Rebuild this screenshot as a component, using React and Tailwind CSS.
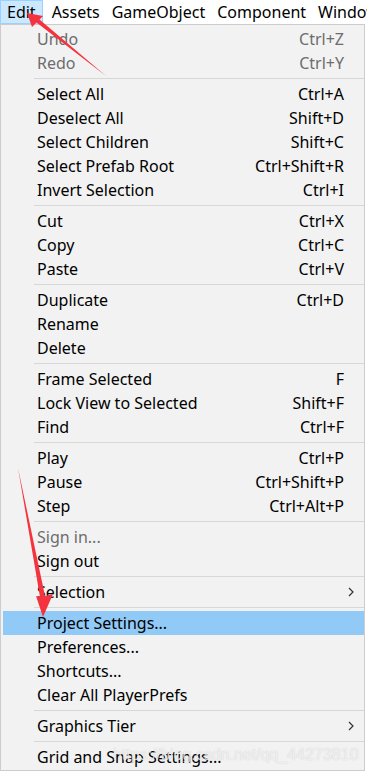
import React from "react";

const groups = [
  [
    { label: "Undo", key: "Ctrl+Z", disabled: true },
    { label: "Redo", key: "Ctrl+Y", disabled: true },
  ],
  [
    { label: "Select All", key: "Ctrl+A" },
    { label: "Deselect All", key: "Shift+D" },
    { label: "Select Children", key: "Shift+C" },
    { label: "Select Prefab Root", key: "Ctrl+Shift+R" },
    { label: "Invert Selection", key: "Ctrl+I" },
  ],
  [
    { label: "Cut", key: "Ctrl+X" },
    { label: "Copy", key: "Ctrl+C" },
    { label: "Paste", key: "Ctrl+V" },
  ],
  [
    { label: "Duplicate", key: "Ctrl+D" },
    { label: "Rename" },
    { label: "Delete" },
  ],
  [
    { label: "Frame Selected", key: "F" },
    { label: "Lock View to Selected", key: "Shift+F" },
    { label: "Find", key: "Ctrl+F" },
  ],
  [
    { label: "Play", key: "Ctrl+P" },
    { label: "Pause", key: "Ctrl+Shift+P" },
    { label: "Step", key: "Ctrl+Alt+P" },
  ],
  [
    { label: "Sign in...", disabled: true },
    { label: "Sign out" },
  ],
  [{ label: "Selection", sub: true }],
  [
    { label: "Project Settings...", active: true },
    { label: "Preferences..." },
    { label: "Shortcuts..." },
    { label: "Clear All PlayerPrefs" },
  ],
  [{ label: "Graphics Tier", sub: true }],
  [{ label: "Grid and Snap Settings..." }],
];

const Chevron = () => (
  <svg width="6" height="10" viewBox="0 0 6 10" className="text-[#333]">
    <polyline points="1,1 5,5 1,9" fill="none" stroke="currentColor" strokeWidth="1.2" />
  </svg>
);

const MenuRow = ({ item }) => (
  <div
    className={`flex h-6 items-center pl-[34px] pr-[20px] ${
      item.active ? "bg-[#91c9f7]" : ""
    } ${item.disabled ? "text-[#6d6d6d]" : "text-black"}`}
  >
    <span className="flex-1 whitespace-nowrap">{item.label}</span>
    {item.key && <span className="whitespace-nowrap">{item.key}</span>}
    {item.sub && (
      <span className="-mr-[10px] flex items-center">
        <Chevron />
      </span>
    )}
  </div>
);

export default function App() {
  return (
    <div className="relative h-[772px] w-[367px] overflow-hidden bg-white font-['Noto_Sans',sans-serif] text-[16px] leading-none">
      {/* menu bar */}
      <div className="flex h-6 items-stretch text-black">
        <div className="flex items-center border border-[#99d1ff] bg-[#cce8ff] px-[6px]">Edit</div>
        <div className="ml-[3px] flex items-center px-[6px]">Assets</div>
        <div className="flex items-center px-[6px]">GameObject</div>
        <div className="flex items-center px-[6px]">Component</div>
        <div className="flex items-center px-[6px] whitespace-nowrap">Window</div>
      </div>

      {/* dropdown panel */}
      <div className="w-[365px] border border-[#cccccc] bg-[#f2f2f2] pb-[1px] pl-[2px] pt-[2px]">
        {groups.map((g, gi) => (
          <React.Fragment key={gi}>
            {gi > 0 && (
              <div className="py-[3px] pl-[31px]">
                <div className="h-px bg-[#d7d7d7]" />
              </div>
            )}
            {g.map((item) => (
              <MenuRow key={item.label} item={item} />
            ))}
          </React.Fragment>
        ))}
      </div>

      {/* watermark */}
      <div className="pointer-events-none absolute left-[113px] top-[747px] whitespace-nowrap font-['Liberation_Sans',sans-serif] text-[16px] text-white/70 [text-shadow:0_0_1px_rgba(150,150,150,0.5)]">
        https://blog.csdn.net/qq_44273810
      </div>

      {/* red arrows */}
      <svg className="pointer-events-none absolute left-0 top-0" width="367" height="772">
        <polygon points="27,13 43,16 39.5,19.5 106,76 36.5,22.5 32,27" fill="#f5333f" />
        <polygon points="43,617 36,596 40,597 18,468 45,596 53,594" fill="#f5333f" />
      </svg>
    </div>
  );
}
